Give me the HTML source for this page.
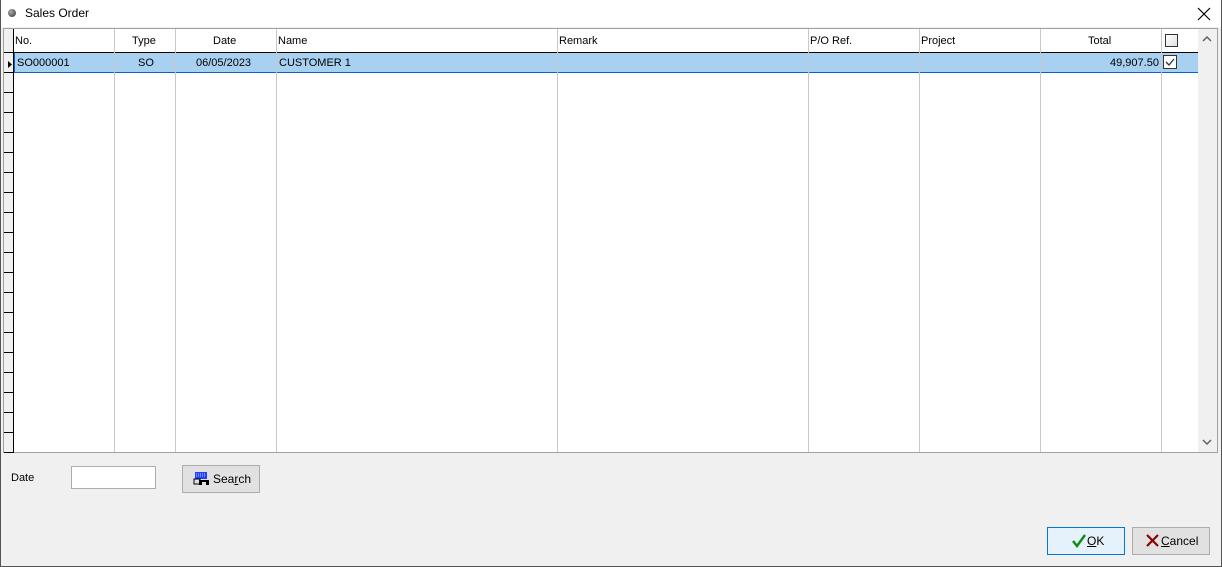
<!DOCTYPE html>
<html><head><style>
*{margin:0;padding:0;box-sizing:border-box}
body{width:1222px;height:567px;overflow:hidden;background:#f0f0f0;font-family:"Liberation Sans",Tahoma,sans-serif;font-size:11px;color:#000;position:relative}
.a{position:absolute}
.t{position:absolute;white-space:nowrap;line-height:14px}
</style></head><body>
<div class="a" style="left:0;top:0;width:1222px;height:567px;border:1px solid #555;border-top:none"></div>
<div class="a" style="left:1px;top:0;width:1220px;height:27px;background:#fff"></div>
<div class="a" style="left:8px;top:9px;width:8px;height:8px;border-radius:50%;background:radial-gradient(circle at 35% 35%,#aaa,#333)"></div>
<div class="t" style="left:25px;top:6px;font-size:12px">Sales Order</div>
<svg class="a" style="left:1197px;top:7px" width="14" height="14"><path d="M1 1L13 13M13 1L1 13" stroke="#000" stroke-width="1.2"/></svg>
<div class="a" style="left:3px;top:28px;width:1215px;height:425px;background:#fff;border:1px solid #a0a0a0"></div>
<div class="a" style="left:4px;top:29px;width:10px;height:423px;background:#f0f0f0;border-right:1px solid #000"></div>
<svg class="a" style="left:4px;top:29px" width="10" height="424">
<g stroke="#000" stroke-width="1">
<line x1="0" y1="23.5" x2="10" y2="23.5"/>
<line x1="0" y1="43.5" x2="10" y2="43.5"/><line x1="0" y1="63.5" x2="10" y2="63.5"/><line x1="0" y1="83.5" x2="10" y2="83.5"/><line x1="0" y1="103.5" x2="10" y2="103.5"/><line x1="0" y1="123.5" x2="10" y2="123.5"/><line x1="0" y1="143.5" x2="10" y2="143.5"/><line x1="0" y1="163.5" x2="10" y2="163.5"/><line x1="0" y1="183.5" x2="10" y2="183.5"/><line x1="0" y1="203.5" x2="10" y2="203.5"/><line x1="0" y1="223.5" x2="10" y2="223.5"/><line x1="0" y1="243.5" x2="10" y2="243.5"/><line x1="0" y1="263.5" x2="10" y2="263.5"/><line x1="0" y1="283.5" x2="10" y2="283.5"/><line x1="0" y1="303.5" x2="10" y2="303.5"/><line x1="0" y1="323.5" x2="10" y2="323.5"/><line x1="0" y1="343.5" x2="10" y2="343.5"/><line x1="0" y1="363.5" x2="10" y2="363.5"/><line x1="0" y1="383.5" x2="10" y2="383.5"/><line x1="0" y1="403.5" x2="10" y2="403.5"/><line x1="0" y1="423.5" x2="10" y2="423.5"/>
</g>
<path d="M4 32L8 35.5L4 39Z" fill="#000"/>
</svg>
<div class="a" style="left:14px;top:52px;width:1185px;height:21px;background:#a8d0f0;border:1px solid #0a64c8;border-top:1px solid #000"></div>
<div class="a" style="left:114px;top:29px;width:1px;height:423px;background:#c8c8c8"></div>
<div class="a" style="left:175px;top:29px;width:1px;height:423px;background:#c8c8c8"></div>
<div class="a" style="left:276px;top:29px;width:1px;height:423px;background:#c8c8c8"></div>
<div class="a" style="left:557px;top:29px;width:1px;height:423px;background:#c8c8c8"></div>
<div class="a" style="left:808px;top:29px;width:1px;height:423px;background:#c8c8c8"></div>
<div class="a" style="left:919px;top:29px;width:1px;height:423px;background:#c8c8c8"></div>
<div class="a" style="left:1040px;top:29px;width:1px;height:423px;background:#c8c8c8"></div>
<div class="a" style="left:1161px;top:29px;width:1px;height:423px;background:#c8c8c8"></div>
<div class="a" style="left:1198px;top:29px;width:19px;height:423px;background:#f0f0f0"></div>
<svg class="a" style="left:1202px;top:35px" width="10" height="8"><path d="M1 6L5 2L9 6" stroke="#606060" stroke-width="1.5" fill="none"/></svg>
<svg class="a" style="left:1202px;top:438px" width="10" height="8"><path d="M1 2L5 6L9 2" stroke="#606060" stroke-width="1.5" fill="none"/></svg>
<div class="t" style="left:15px;top:34px">No.</div>
<div class="t" style="left:132px;top:34px">Type</div>
<div class="t" style="left:213px;top:34px">Date</div>
<div class="t" style="left:278px;top:34px">Name</div>
<div class="t" style="left:559px;top:34px">Remark</div>
<div class="t" style="left:810px;top:34px">P/O Ref.</div>
<div class="t" style="left:921px;top:34px">Project</div>
<div class="t" style="left:1088px;top:34px">Total</div>
<div class="a" style="left:1165px;top:34px;width:13px;height:13px;border:1px solid #333;background:linear-gradient(135deg,#fff,#e0e0e0)"></div>
<div class="t" style="left:17px;top:56px">SO000001</div>
<div class="t" style="left:138px;top:56px">SO</div>
<div class="t" style="left:196px;top:56px">06/05/2023</div>
<div class="t" style="left:279px;top:56px">CUSTOMER 1</div>
<div class="t" style="left:1110px;top:56px">49,907.50</div>
<div class="a" style="left:1163px;top:55px;width:14px;height:14px;border:1px solid #333;background:#fff"></div>
<svg class="a" style="left:1163px;top:55px" width="14" height="14"><path d="M3 7L6 10L11 4" stroke="#333" stroke-width="1.3" fill="none"/></svg>
<div class="t" style="left:11px;top:471px">Date</div>
<div class="a" style="left:71px;top:466px;width:85px;height:23px;background:#fff;border:1px solid #adadad"></div>
<div class="a" style="left:182px;top:465px;width:78px;height:28px;background:#e1e1e1;border:1px solid #adadad"></div>
<svg class="a" style="left:193px;top:471px" width="18" height="16"><rect x="2" y="1" width="12" height="7" fill="#2040ff"/><path d="M3 3h10M3 5h10" stroke="#fff" stroke-width="0.8" stroke-dasharray="1 1"/><rect x="1" y="8" width="6" height="5" fill="none" stroke="#000"/><path d="M6 9h10v5h-3v-3h-4v3H6z" fill="#000"/></svg>
<div class="t" style="left:213px;top:472px;font-size:12px">Sea<u>r</u>ch</div>
<div class="a" style="left:1047px;top:527px;width:78px;height:28px;background:#e5f1fb;border:1px solid #0078d7"></div>
<svg class="a" style="left:1072px;top:534px" width="14" height="14"><path d="M1 7L5 12L13 1" stroke="#108a10" stroke-width="2.4" fill="none"/></svg>
<div class="t" style="left:1087px;top:534px;font-size:12px"><u>O</u>K</div>
<div class="a" style="left:1132px;top:527px;width:78px;height:28px;background:#e1e1e1;border:1px solid #adadad"></div>
<svg class="a" style="left:1146px;top:534px" width="13" height="13"><path d="M1 1L12 12M12 1L1 12" stroke="#8b0000" stroke-width="2.2"/></svg>
<div class="t" style="left:1161px;top:534px;font-size:12px"><u>C</u>ancel</div>
</body></html>
